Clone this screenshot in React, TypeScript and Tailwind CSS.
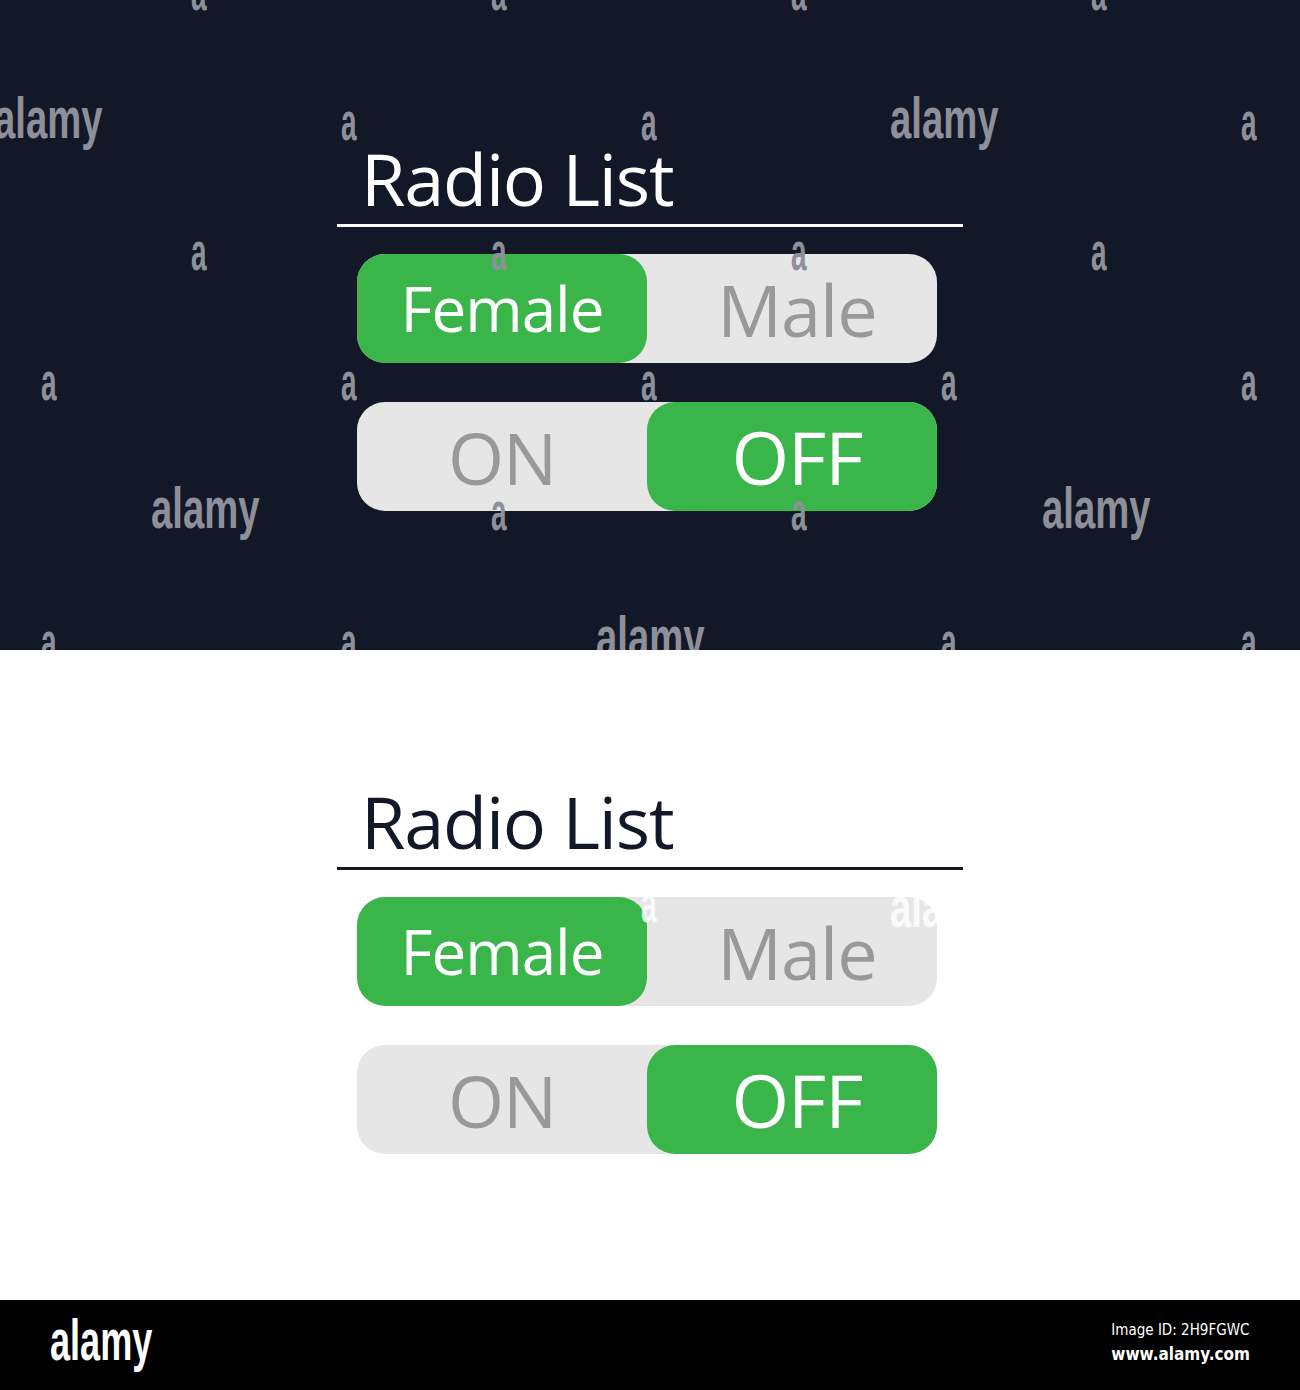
type SegProps = { left: string; right: string; active: 'left' | 'right'; leftSize: string; rightSize: string };

function Segmented({ left, right, active, leftSize, rightSize }: SegProps) {
  const on = 'bg-[#3ab54a] text-white';
  const off = 'text-[#999999]';
  return (
    <div className="ml-5 flex h-[109px] w-[580px] rounded-[28px] bg-[#e6e6e6]">
      <div className={`flex w-1/2 items-center justify-center rounded-[28px] ${active === 'left' ? on : off}`}>
        <span className={`tracking-[-1px] ${leftSize}`}>{left}</span>
      </div>
      <div className={`flex w-1/2 items-center justify-center rounded-[28px] pl-[10px] ${active === 'right' ? on : off}`}>
        <span className={`tracking-[-1px] ${rightSize}`}>{right}</span>
      </div>
    </div>
  );
}

function RadioPanel({ dark }: { dark: boolean }) {
  return (
    <div className="relative ml-[337px] w-[626px]">
      <h1 className={`pl-[24px] text-[72px] leading-none tracking-[-1.2px] ${dark ? 'text-white' : 'text-[#131828]'}`}>
        Radio List
      </h1>
      <div className={`mt-[10px] h-[3px] w-full ${dark ? 'bg-white' : 'bg-[#131828]'}`} />
      <div className="mt-[27px] flex flex-col gap-[39px]">
        <Segmented left="Female" right="Male" active="left" leftSize="text-[62px]" rightSize="text-[72px]" />
        <Segmented left="ON" right="OFF" active="right" leftSize="text-[72px]" rightSize="text-[74px]" />
      </div>
    </div>
  );
}

// stock watermark: grid of small "a" plus a few "alamy" words (glyph-top coords)
const smallMarks: [number, number][] = [
  [192, -17], [492, -17], [792, -17], [1092, -17],
  [342, 113], [642, 113], [1242, 113],
  [192, 243], [492, 243], [792, 243], [1092, 243],
  [42, 373], [342, 373], [642, 373], [942, 373], [1242, 373],
  [492, 503], [792, 503],
  [42, 633], [342, 633], [942, 633], [1242, 633],
];
const bigMarks: [number, number][] = [
  [-5, 108], [891, 108], [152, 498], [1043, 498], [597, 627],
];

const markFont = '"Liberation Sans", Arial, sans-serif';

function Mark({ x, y, text, color }: { x: number; y: number; text: string; color: string }) {
  // y is the top of the x-height; the span is stretched tall and narrow
  const small = text === 'a';
  return (
    <span
      className={`pointer-events-none absolute inline-block font-bold leading-none ${color} ${small ? 'text-[40px]' : 'text-[44px]'}`}
      style={{
        left: x - 1,
        top: y - (small ? 17 : 19),
        fontFamily: markFont,
        transform: small ? 'scale(0.7, 1.3)' : 'scale(0.87, 1.32)',
        transformOrigin: 'top left',
      }}
    >
      {text}
    </span>
  );
}

export default function App() {
  return (
    <div className="relative h-[1390px] w-[1300px] overflow-hidden" style={{ fontFamily: '"Open Sans", "Noto Sans", sans-serif' }}>
      {/* Dark half */}
      <div className="relative h-[650px] overflow-hidden bg-[#131828] pt-[142px]">
        <RadioPanel dark />
        {smallMarks.map(([x, y], i) => (
          <Mark key={`s${i}`} x={x} y={y} text="a" color="text-[#8e9099]" />
        ))}
        {bigMarks.map(([x, y], i) => (
          <Mark key={`b${i}`} x={x} y={y} text="alamy" color="text-[#8e9099]" />
        ))}
      </div>

      {/* Light half */}
      <div className="relative h-[650px] overflow-hidden bg-white pt-[135px]">
        <RadioPanel dark={false} />
        <Mark x={642} y={245} text="a" color="text-white/80" />
        <Mark x={891} y={247} text="alamy" color="text-white/80" />
      </div>

      {/* Footer strip */}
      <div className="flex h-[90px] items-start justify-between bg-black pl-[50px] pr-[50px]">
        <span
          className="mt-[11px] inline-block text-[44px] font-bold leading-none text-white"
          style={{ fontFamily: markFont, transform: 'scale(0.82, 1.32)', transformOrigin: 'top left' }}
        >
          alamy
        </span>
        <div className="mt-[21px] flex flex-col gap-[4px] text-white" style={{ fontFamily: '"DejaVu Sans Condensed", "DejaVu Sans", sans-serif' }}>
          <span className="text-[15px] leading-tight">Image ID: 2H9FGWC</span>
          <span className="text-[17px] font-bold leading-tight">www.alamy.com</span>
        </div>
      </div>
    </div>
  );
}
